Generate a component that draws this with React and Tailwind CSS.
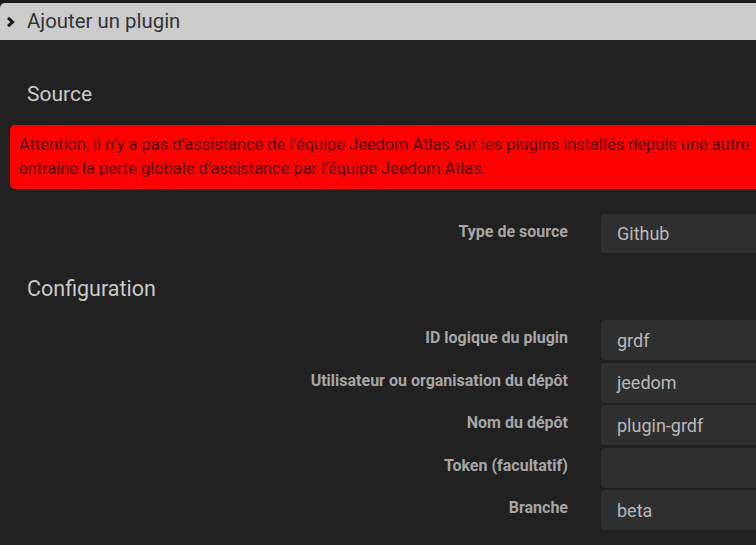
const sourceRows = [{ label: "Type de source", value: "Github" }];

const configRows = [
  { label: "ID logique du plugin", value: "grdf" },
  { label: "Utilisateur ou organisation du dépôt", value: "jeedom" },
  { label: "Nom du dépôt", value: "plugin-grdf" },
  { label: "Token (facultatif)", value: "" },
  { label: "Branche", value: "beta" },
];

const FormRow = ({ label, value, tall }) => (
  <div className="flex items-start mb-[2.5px]">
    <div className="w-[573px] shrink-0 pr-[15px] pt-[8px] text-right text-[16px] leading-[20px] font-bold text-[#a6a6a6]">
      {label}
    </div>
    <div
      className={`ml-[18px] w-[320px] shrink-0 rounded-[4px] bg-[#2f2f2f] pl-[16px] flex items-center text-[18px] text-[#b9b9b9] ${
        tall ? "h-[40px]" : "h-[39px]"
      }`}
    >
      {value}
    </div>
  </div>
);

const App = () => {
  return (
    <div
      className="w-[756px] h-[545px] overflow-hidden bg-[#212121]"
      style={{ fontFamily: "Roboto, 'Liberation Sans', sans-serif" }}
    >
      <div className="w-[1000px]">
        <div className="h-[3px] bg-[#1a1a1a]"></div>
        <div className="h-[37px] bg-[#cccccc] rounded-tl-[5px] flex items-center pl-[6px]">
          <svg width="10" height="12" viewBox="0 0 10 12" className="mr-[11px]">
            <path d="M2 1.8 L6.6 6 L2 10.2" fill="none" stroke="#1a1a1a" strokeWidth="3" />
          </svg>
          <span className="text-[20.4px] text-[#333]">Ajouter un plugin</span>
        </div>

        <div className="px-[10px]">
          <div className="mt-[40px] pl-[17px] text-[21px] leading-[28px] text-[#cacaca]">Source</div>
          <div className="mt-[17px] rounded-[5px] bg-[#ff0000] px-[9px] py-[8px] text-[16.4px] leading-[24px] text-[#520000] whitespace-nowrap">
            Attention, il n’y a pas d’assistance de l’équipe Jeedom Atlas sur les plugins installés depuis une autre
            <br />
            entraine la perte globale d’assistance par l’équipe Jeedom Atlas.
          </div>

          <div className="mt-[25px]">
            {sourceRows.map((r) => (
              <FormRow key={r.label} {...r} />
            ))}
          </div>

          <div className="mt-[22px] pl-[17px] text-[21.5px] leading-[28px] text-[#cacaca]">Configuration</div>

          <div className="mt-[17px]">
            {configRows.map((r) => (
              <FormRow key={r.label} {...r} tall />
            ))}
          </div>
        </div>
      </div>
    </div>
  );
};

export default App;
